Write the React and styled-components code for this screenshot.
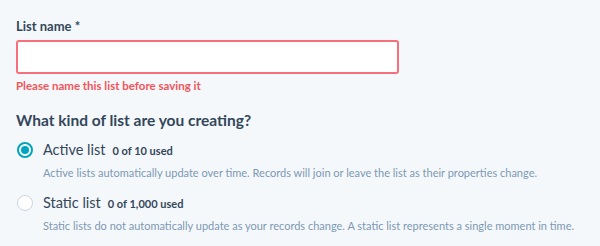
import React from 'react';
import styled, { createGlobalStyle } from 'styled-components';

const Global = createGlobalStyle`
    body {
        margin:0;
        background:#f5f8fa;
        font-family:"Lato", "Noto Sans", sans-serif;
        color:#33475b;
    }
`;

const Page = styled.div`
    width:600px;
    height:246px;
    box-sizing:border-box;
    padding:18px 16px 0;
    overflow:hidden;
`;

const Label = styled.label`
    display:block;
    font-size:13px;
    font-weight:700;
    line-height:16px;
    margin-bottom:6px;
`;

const Input = styled.input`
    display:block;
    box-sizing:border-box;
    width:383px;
    height:34px;
    border:2px solid #f5707a;
    border-radius:3px;
    background:#fff;
    outline:none;
`;

const Error = styled.div`
    color:#f2545b;
    font-size:11.5px;
    font-weight:700;
    line-height:14px;
    margin-top:5px;
`;

const Heading = styled.h2`
    margin:17px 0 10px;
    font-size:15.5px;
    font-weight:700;
    line-height:20px;
`;

const Option = styled.div`
    display:grid;
    grid-template-columns:27px 1fr;
    margin-bottom:${props => props.last ? 0 : '13px'};
`;

const Radio = styled.span`
    width:16px;
    height:16px;
    box-sizing:border-box;
    border-radius:50%;
    margin:2px 0 0 1px;
    background:#fff;
    border:${props => props.checked ? '2px solid #00a4bd' : '1px solid #cbd6e2'};
    display:flex;
    align-items:center;
    justify-content:center;
    &::after{
        content:'';
        display:${props => props.checked ? 'block' : 'none'};
        width:8px;
        height:8px;
        border-radius:50%;
        background:#00a4bd;
    }
`;

const Title = styled.div`
    font-size:14.5px;
    font-weight:400;
    line-height:20px;
`;

const Used = styled.span`
    font-size:11px;
    font-weight:700;
    margin-left:7px;
`;

const Desc = styled.div`
    grid-column:2;
    font-size:11px;
    line-height:14px;
    color:#7c98b6;
    margin-top:5px;
`;

const ListOption = ({title, used, desc, checked, last}) => (
    <Option last={last}>
        <Radio checked={checked} />
        <Title>{title}<Used>{used}</Used></Title>
        <Desc>{desc}</Desc>
    </Option>
);

export default function App() {
    return (
        <Page>
            <Global />
            <Label>List name *</Label>
            <Input type="text" />
            <Error>Please name this list before saving it</Error>
            <Heading>What kind of list are you creating?</Heading>
            <ListOption
                checked
                title="Active list"
                used="0 of 10 used"
                desc="Active lists automatically update over time. Records will join or leave the list as their properties change."
            />
            <ListOption
                last
                title="Static list"
                used="0 of 1,000 used"
                desc="Static lists do not automatically update as your records change. A static list represents a single moment in time."
            />
        </Page>
    );
}
